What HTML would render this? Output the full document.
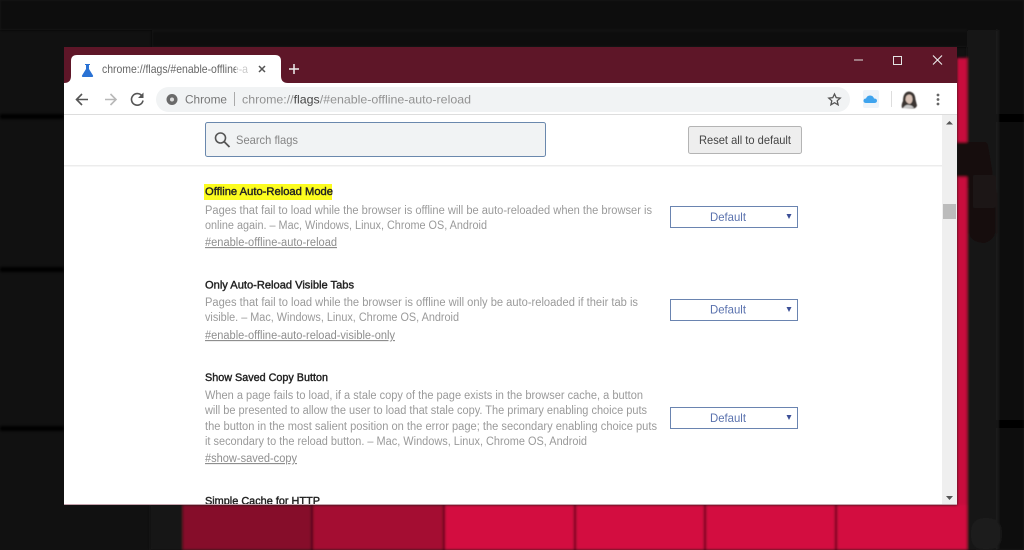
<!DOCTYPE html>
<html><head><meta charset="utf-8"><style>
html,body{margin:0;padding:0;background:#101010;width:1024px;height:550px;overflow:hidden}
svg{display:block}
text{font-family:"Liberation Sans",sans-serif}
.d{font-size:11.5px;fill:#9a9a9a}
.t{font-size:11px;fill:#222;stroke:#222;stroke-width:.4px}
.l{font-size:11.5px;fill:#8e8e8e;text-decoration:underline}
.s{font-size:12px;fill:#5a72ae}
</style></head><body>
<svg width="1024" height="550" viewBox="0 0 1024 550" xmlns="http://www.w3.org/2000/svg">
<defs><filter id="b" x="-5%" y="-5%" width="110%" height="110%"><feGaussianBlur stdDeviation="0.35"/></filter>
<filter id="b2"><feGaussianBlur stdDeviation="1.2"/></filter>
<filter id="b3" x="-20%" y="-20%" width="140%" height="140%"><feGaussianBlur stdDeviation="0.5"/></filter>
<clipPath id="win"><rect x="64" y="47" width="893" height="457"/></clipPath></defs>
<rect width="1024" height="550" fill="#111"/>
<g filter="url(#b2)">
<rect x="0" y="0" width="1024" height="30" fill="#0c0c0c"/>
<rect x="0" y="114" width="64" height="5" fill="#050505"/>
<rect x="0" y="267" width="64" height="5" fill="#050505"/>
<rect x="0" y="426" width="64" height="5" fill="#050505"/>
<rect x="152" y="31" width="848" height="16" fill="#0a0d0d"/>
<rect x="150" y="505" width="33" height="45" fill="#151515"/>
<rect x="183" y="505" width="784" height="45" fill="#d3103f"/>
<rect x="183" y="505" width="128" height="45" fill="#860c2a"/>
<rect x="312" y="505" width="131" height="45" fill="#a40d32"/>
<rect x="311" y="505" width="2" height="45" fill="#2a040d"/>
<rect x="443" y="505" width="2" height="45" fill="#3a0510"/>
<rect x="574" y="505" width="2" height="45" fill="#3a0510"/>
<rect x="704" y="505" width="2" height="45" fill="#3a0510"/>
<rect x="835" y="505" width="2" height="45" fill="#3a0510"/>
<rect x="957" y="58" width="10" height="447" fill="#c8103c"/>
<rect x="967" y="30" width="57" height="520" fill="#101010"/>
<rect x="967" y="30" width="30" height="520" fill="#161515"/>
<rect x="997" y="30" width="1" height="520" fill="#262626"/>
<rect x="998" y="420" width="26" height="8" fill="#050505"/>
<rect x="998" y="114" width="26" height="8" fill="#060606"/>
<rect x="998" y="268" width="26" height="6" fill="#070707"/>
<rect x="957" y="142" width="12" height="35" fill="#121010"/>
<path d="M969 142h16q3 0 4 8l8 50v30q-3 10-12 13-14 0-16-10v-45h-2z" fill="#131111"/>
<rect x="973" y="175" width="22" height="33" rx="2" fill="#1a1717"/>
<rect x="971" y="518" width="30" height="32" rx="12" fill="#1a1a1a"/>
</g>
<!-- window -->
<rect x="64" y="47" width="893" height="457" fill="#fff"/>
<rect x="64" y="47" width="893" height="36" fill="#5e1628"/>
<!-- tab -->
<path d="M64 83q7 0 7-7V61q0-6 6-6h198q6 0 6 6v15q0 7 7 7z" fill="#fff"/>
<path d="M85 64h5v1l-1 0v4l4 6.500q.5 1.500-1 1.500h-9q-1.500 0-1-1.500l4-6.500v-4h-1z" fill="#2a72d4"/>
<text x="102" y="73" font-size="12" fill="#666" textLength="146" lengthAdjust="spacingAndGlyphs" filter="url(#b)">chrome://flags/#enable-offline-a</text>
<rect x="236" y="60" width="14" height="18" fill="#fff" opacity=".65"/>
<path d="M259 66l6 6M265 66l-6 6" stroke="#555" stroke-width="1.500" fill="none"/>
<path d="M294 64v10M289 69h10" stroke="#eee" stroke-width="1.500" fill="none"/>
<!-- window controls -->
<path d="M854 60h9" stroke="#ddd" stroke-width="1"/>
<rect x="893.500" y="56.500" width="8" height="8" fill="none" stroke="#e4e4e4" stroke-width="1"/>
<path d="M933 55.500l9 9M942 55.500l-9 9" stroke="#eee" stroke-width="1.100" fill="none"/>
<!-- toolbar -->
<rect x="64" y="83" width="893" height="31" fill="#fff"/>
<rect x="64" y="114" width="893" height="1" fill="#ddd"/>
<path d="M88 99.500H77M82 94l-5.500 5.500L82 105" stroke="#555" stroke-width="1.600" fill="none"/>
<path d="M116 99.500h-11M110.500 94l5.500 5.500-5.500 5.500" stroke="#b8b8b8" stroke-width="1.600" fill="none"/>
<path d="M142 96a5.800 5.800 0 1 0 1 4.500" stroke="#555" stroke-width="1.600" fill="none"/>
<path d="M143.500 92.500v5.500h-5.500z" fill="#555"/>
<rect x="156" y="87" width="694" height="25" rx="12.500" fill="#f1f3f4"/>
<circle cx="172" cy="99.500" r="5.500" fill="#6a6a6a"/><circle cx="172" cy="99.500" r="2" fill="#ddd"/>
<g filter="url(#b)">
<text x="185" y="103.500" font-size="12" fill="#777" textLength="42" lengthAdjust="spacingAndGlyphs">Chrome</text>
<rect x="234" y="92" width="1" height="14" fill="#aaa"/>
<text x="242" y="103.500" font-size="12" fill="#929292" textLength="229" lengthAdjust="spacingAndGlyphs">chrome://<tspan fill="#444">flags</tspan>/#enable-offline-auto-reload</text>
</g>
<path d="M834.500 94l1.700 3.700 4 .4-3 2.700.9 4-3.600-2.100-3.600 2.100.9-4-3-2.700 4-.4z" fill="none" stroke="#555" stroke-width="1.300"/>
<rect x="863" y="90" width="16" height="18" rx="2" fill="#eef4fa"/>
<path d="M866 103q-2.500 0-2.500-2.200t2.500-2.300q1-3 4-3 3.200 0 4 3 3 0 3 2.300T874 103z" fill="#3fa4ee"/>
<rect x="891" y="91" width="1" height="16" fill="#ddd"/>
<g filter="url(#b3)">
<path d="M902 108q-1-3 1-7 0-9 6-9.500 6 .5 6.500 8l1.500 6q-1 3-4 3z" fill="#3a3431"/>
<path d="M905.500 100q0-5.500 4-5.500 3 .5 3 4.500 0 4-3 5-3-1-4-4z" fill="#d9c2b6"/>
<path d="M903 108q3-4 6-3 3 0 5 3z" fill="#c9c9c9"/>
</g>
<circle cx="938" cy="95" r="1.400" fill="#666"/><circle cx="938" cy="99.500" r="1.400" fill="#666"/><circle cx="938" cy="104" r="1.400" fill="#666"/>
<!-- scrollbar -->
<rect x="942" y="115" width="15" height="389" fill="#efefef"/>
<rect x="943" y="204" width="13" height="15" fill="#bcbcbc"/>
<path d="M946 124.500l3.500-3.500 3.500 3.500z" fill="#555"/>
<path d="M946 496l3.500 4 3.500-4z" fill="#555"/>
<!-- header -->
<rect x="64" y="165" width="878" height="1.500" fill="#ececec"/>
<rect x="205.500" y="122.500" width="340" height="34" rx="2" fill="#f1f3f4" stroke="#6a88ad" stroke-width="1"/>
<circle cx="220.500" cy="138" r="5" fill="none" stroke="#555" stroke-width="1.600"/>
<path d="M224 141.500l5.500 5.500" stroke="#555" stroke-width="1.800"/>
<rect x="688.500" y="126.500" width="113" height="27" rx="2" fill="#eeeeee" stroke="#b4b4b4" stroke-width="1"/>
<rect x="204" y="184" width="128" height="16" fill="#fcfc1e"/>
<g filter="url(#b)" clip-path="url(#win)">
<text x="236" y="144" font-size="12" fill="#858585" textLength="62" lengthAdjust="spacingAndGlyphs">Search flags</text>
<text x="699" y="144" font-size="12" fill="#444" textLength="92" lengthAdjust="spacingAndGlyphs">Reset all to default</text>

<text class="t" x="205" y="195" textLength="128" lengthAdjust="spacingAndGlyphs">Offline Auto-Reload Mode</text>
<text class="d" x="205" y="214" textLength="447" lengthAdjust="spacingAndGlyphs">Pages that fail to load while the browser is offline will be auto-reloaded when the browser is</text>
<text class="d" x="205" y="229" textLength="282" lengthAdjust="spacingAndGlyphs">online again. – Mac, Windows, Linux, Chrome OS, Android</text>
<text class="l" x="205" y="246" textLength="132" lengthAdjust="spacingAndGlyphs">#enable-offline-auto-reload</text>

<text class="t" x="205" y="288.500" textLength="149" lengthAdjust="spacingAndGlyphs">Only Auto-Reload Visible Tabs</text>
<text class="d" x="205" y="306" textLength="433" lengthAdjust="spacingAndGlyphs">Pages that fail to load while the browser is offline will only be auto-reloaded if their tab is</text>
<text class="d" x="205" y="321" textLength="254" lengthAdjust="spacingAndGlyphs">visible. – Mac, Windows, Linux, Chrome OS, Android</text>
<text class="l" x="205" y="339" textLength="190" lengthAdjust="spacingAndGlyphs">#enable-offline-auto-reload-visible-only</text>

<text class="t" x="205" y="381" textLength="123" lengthAdjust="spacingAndGlyphs">Show Saved Copy Button</text>
<text class="d" x="205" y="399" textLength="438" lengthAdjust="spacingAndGlyphs">When a page fails to load, if a stale copy of the page exists in the browser cache, a button</text>
<text class="d" x="205" y="414" textLength="442" lengthAdjust="spacingAndGlyphs">will be presented to allow the user to load that stale copy. The primary enabling choice puts</text>
<text class="d" x="205" y="430" textLength="452" lengthAdjust="spacingAndGlyphs">the button in the most salient position on the error page; the secondary enabling choice puts</text>
<text class="d" x="205" y="445" textLength="382" lengthAdjust="spacingAndGlyphs">it secondary to the reload button. – Mac, Windows, Linux, Chrome OS, Android</text>
<text class="l" x="205" y="462" textLength="92" lengthAdjust="spacingAndGlyphs">#show-saved-copy</text>

<text class="t" x="205" y="504.500" textLength="115" lengthAdjust="spacingAndGlyphs">Simple Cache for HTTP</text>

<text class="s" x="710" y="221" textLength="36" lengthAdjust="spacingAndGlyphs">Default</text>
<text class="s" x="710" y="313.500" textLength="36" lengthAdjust="spacingAndGlyphs">Default</text>
<text class="s" x="710" y="422" textLength="36" lengthAdjust="spacingAndGlyphs">Default</text>
</g>
<rect x="64" y="504" width="893" height="1" fill="#c4a3ad"/>
<g fill="none" stroke="#6a84b0" stroke-width="1">
<rect x="670.500" y="206.500" width="127" height="21"/>
<rect x="670.500" y="299.500" width="127" height="21"/>
<rect x="670.500" y="407.500" width="127" height="21"/>
</g>
<g fill="#3c4f96">
<path d="M786.500 214h5l-2.500 5z"/>
<path d="M786.500 307h5l-2.500 5z"/>
<path d="M786.500 415h5l-2.500 5z"/>
</g>
</svg>
</body></html>
